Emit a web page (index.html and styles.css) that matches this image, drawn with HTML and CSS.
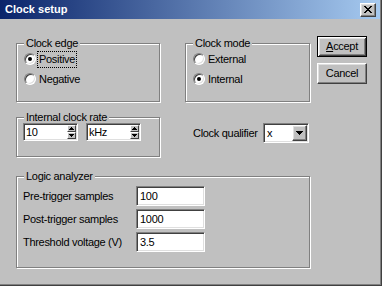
FILE: index.html
```html
<!DOCTYPE html>
<html>
<head>
<meta charset="utf-8">
<link rel="stylesheet" href="styles.css">
</head>
<body>
<div class="window">
  <div class="titlebar">
    <span class="title">Clock setup</span>
    <span class="close"><svg width="8" height="7" viewBox="0 0 8 7" shape-rendering="crispEdges"><path fill="#000" d="M0 0h2v1H0zM6 0h2v1H6zM1 1h2v1H1zM5 1h2v1H5zM2 2h4v1H2zM3 3h2v1H3zM2 4h4v1H2zM1 5h2v1H1zM5 5h2v1H5zM0 6h2v1H0zM6 6h2v1H6z"/></svg></span>
  </div>
  <div class="client">
    <div class="main">
      <div class="row1">
        <div class="group edge">
          <span class="legend">Clock edge</span>
          <div class="opts">
            <div class="opt"><span class="radio checked"></span><span class="lbl focus">Positive</span></div>
            <div class="opt"><span class="radio"></span><span class="lbl">Negative</span></div>
          </div>
        </div>
        <div class="group mode">
          <span class="legend">Clock mode</span>
          <div class="opts">
            <div class="opt"><span class="radio"></span><span class="lbl">External</span></div>
            <div class="opt"><span class="radio checked"></span><span class="lbl">Internal</span></div>
          </div>
        </div>
      </div>
      <div class="row2">
        <div class="group rate">
          <span class="legend">Internal clock rate</span>
          <div class="spins">
            <div class="spin">
              <span class="val">10</span>
              <span class="updown">
                <span class="ud"><svg width="5" height="3" viewBox="0 0 5 3" shape-rendering="crispEdges"><path fill="#000" d="M2 0h1v1h1v1h1v1H0V2h1V1h1z"/></svg></span>
                <span class="ud"><svg width="5" height="3" viewBox="0 0 5 3" shape-rendering="crispEdges"><path fill="#000" d="M0 0h5v1H4v1H3v1H2V2H1V1H0z"/></svg></span>
              </span>
            </div>
            <div class="spin">
              <span class="val">kHz</span>
              <span class="updown">
                <span class="ud"><svg width="5" height="3" viewBox="0 0 5 3" shape-rendering="crispEdges"><path fill="#000" d="M2 0h1v1h1v1h1v1H0V2h1V1h1z"/></svg></span>
                <span class="ud"><svg width="5" height="3" viewBox="0 0 5 3" shape-rendering="crispEdges"><path fill="#000" d="M0 0h5v1H4v1H3v1H2V2H1V1H0z"/></svg></span>
              </span>
            </div>
          </div>
        </div>
        <div class="qual">
          <span class="qlabel">Clock qualifier</span>
          <div class="combo">
            <span class="val">x</span>
            <span class="drop"><svg width="7" height="4" viewBox="0 0 7 4" shape-rendering="crispEdges"><path fill="#000" d="M0 0h7v1H6v1H5v1H4v1H3V3H2V2H1V1H0z"/></svg></span>
          </div>
        </div>
      </div>
      <div class="group logic">
        <span class="legend">Logic analyzer</span>
        <div class="rows">
          <div class="frow"><span class="flabel">Pre-trigger samples</span><span class="edit">100</span></div>
          <div class="frow"><span class="flabel">Post-trigger samples</span><span class="edit">1000</span></div>
          <div class="frow"><span class="flabel">Threshold voltage (V)</span><span class="edit">3.5</span></div>
        </div>
      </div>
    </div>
    <div class="buttons">
      <div class="btn default"><u>A</u>ccept</div>
      <div class="btn">Cancel</div>
    </div>
  </div>
</div>
</body>
</html>
```
FILE: styles.css
```css
* { box-sizing: border-box; }
body {
  margin: 0;
  background: #c0c0c0;
  font: 11px/13px "Liberation Sans", Arial, sans-serif;
  letter-spacing: -0.3px;
  color: #000;
}
.window {
  width: 382px;
  height: 286px;
  background: #c0c0c0;
  padding: 0 2px 2px 0;
  box-shadow: inset -1px -1px #404040, inset -2px -2px #808080;
  overflow: hidden;
}
.titlebar {
  height: 19px;
  display: flex;
  align-items: center;
  padding: 0 4px 0 5px;
  background: linear-gradient(to right, #0a246a, #a6caf0);
  color: #fff;
  font-weight: bold;
  letter-spacing: 0;
}
.title { flex: 1; }
.close, .ud, .drop, .btn {
  background: #c0c0c0;
  border: 1px solid;
  border-color: #fff #404040 #404040 #fff;
  box-shadow: inset -1px -1px #808080, inset 1px 1px #dfdfdf;
  display: flex;
  align-items: center;
  justify-content: center;
}
.close { width: 16px; height: 14px; }
.client {
  display: flex;
  padding: 17px 0 0 16px;
}
.main { width: 295px; padding-top: 7px; }
.row1 { display: flex; gap: 25px; }
.group {
  border: 1px solid #808080;
  box-shadow: inset 1px 1px #fff, 1px 1px #fff;
}
.legend {
  display: block;
  width: fit-content;
  margin: -7px 0 0 7px;
  padding: 0 2px;
  background: #c0c0c0;
  line-height: 13px;
}
.edge { width: 144px; height: 59px; }
.mode { width: 125px; height: 59px; }
.opts { padding-left: 7px; margin-top: -1px; }
.opt { height: 20px; display: flex; align-items: center; }
.radio {
  width: 12px;
  height: 12px;
  border-radius: 50%;
  background: #fff;
  border: 1px solid;
  border-color: #808080 #fff #fff #808080;
  box-shadow: inset 1px 1px #404040, inset -1px -1px #dfdfdf;
  display: flex;
  align-items: center;
  justify-content: center;
  margin-right: 1px;
}
.radio.checked::after {
  content: "";
  width: 4px;
  height: 4px;
  border-radius: 50%;
  background: #000;
}
.lbl { border: 1px dotted transparent; padding: 1px 1px; }
.lbl.focus { border-color: #000; }
.row2 { display: flex; align-items: flex-start; margin-top: 15px; }
.rate { width: 144px; height: 40px; }
.spins { display: flex; gap: 8px; padding-left: 6px; margin-top: -1px; }
.spin, .combo, .edit {
  background: #fff;
  border: 1px solid;
  border-color: #808080 #fff #fff #808080;
  box-shadow: inset 1px 1px #404040, inset -1px -1px #dfdfdf;
}
.spin {
  width: 55px;
  height: 18px;
  display: flex;
  padding: 1px;
}
.spin .val { flex: 1; padding-left: 1px; line-height: 14px; }
.updown { width: 9px; display: flex; flex-direction: column; }
.ud { flex: 1; box-shadow: none; }
.qual {
  display: flex;
  align-items: center;
  height: 20px;
  margin: 6px 0 0 33px;
}
.qlabel { width: 70px; }
.combo {
  width: 46px;
  height: 20px;
  display: flex;
  padding: 1px;
}
.combo .val { flex: 1; padding-left: 2px; line-height: 16px; }
.drop { width: 15px; }
.logic { width: 294px; height: 92px; margin-top: 19px; }
.rows { padding: 3px 0 0 6px; }
.frow { display: flex; align-items: center; height: 20px; margin-bottom: 3px; }
.flabel { width: 113px; }
.edit {
  width: 69px;
  height: 20px;
  padding: 1px 0 0 3px;
  line-height: 16px;
}
.buttons {
  display: flex;
  flex-direction: column;
  gap: 6px;
  margin-left: 6px;
}
.btn { width: 50px; height: 21px; line-height: 19px; }
.btn.default {
  border: 1px solid #000;
  box-shadow: inset 1px 1px #fff, inset -1px -1px #404040, inset 2px 2px #dfdfdf, inset -2px -2px #808080;
}
.btn u { text-decoration: underline; }
```
